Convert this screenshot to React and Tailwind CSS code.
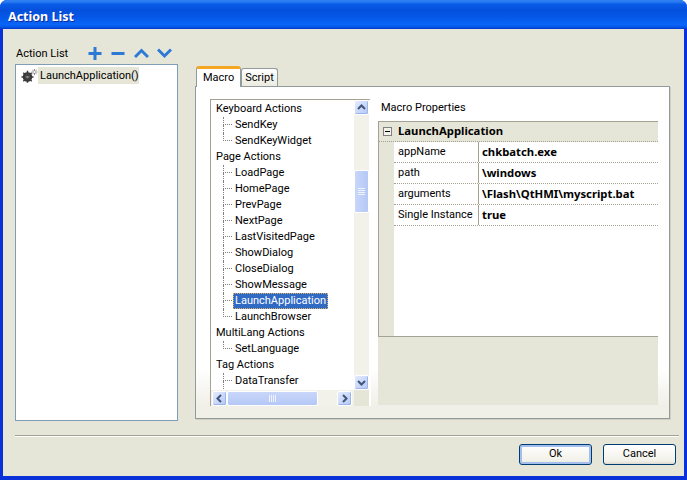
const TREE = [
  { label: "Keyboard Actions", group: true },
  { label: "SendKey" },
  { label: "SendKeyWidget", last: true },
  { label: "Page Actions", group: true },
  { label: "LoadPage" },
  { label: "HomePage" },
  { label: "PrevPage" },
  { label: "NextPage" },
  { label: "LastVisitedPage" },
  { label: "ShowDialog" },
  { label: "CloseDialog" },
  { label: "ShowMessage" },
  { label: "LaunchApplication", selected: true },
  { label: "LaunchBrowser", last: true },
  { label: "MultiLang Actions", group: true },
  { label: "SetLanguage", last: true },
  { label: "Tag Actions", group: true },
  { label: "DataTransfer" },
];

const PROPS = [
  ["appName", "chkbatch.exe"],
  ["path", "\\windows"],
  ["arguments", "\\Flash\\QtHMI\\myscript.bat"],
  ["Single Instance", "true"],
];

function Gear() {
  return (
    <svg width="17" height="14" viewBox="0 0 17 14" className="shrink-0">
      <circle cx="6.5" cy="8" r="3.6" fill="none" stroke="#3a3a3a" strokeWidth="2.4" />
      <g stroke="#3a3a3a" strokeWidth="1.5">
        <path d="M6.5 1.8v12M.5 8h12M2.3 3.8l8.4 8.4M10.7 3.8l-8.4 8.4" />
      </g>
      <circle cx="6.5" cy="8" r="1.3" fill="#8a8a8a" />
      <g stroke="#8c8c8c" strokeWidth="1">
        <path d="M13.5 0v6M10.5 3h6M11.4 1l4.2 4M15.6 1l-4.2 4" />
      </g>
      <circle cx="13.5" cy="3" r="1" fill="#fff" />
    </svg>
  );
}

function ToolIcon({ d }) {
  return (
    <svg width="15" height="13" viewBox="0 0 15 13" className="shrink-0">
      <path d={d} fill="none" stroke="#2d79d6" strokeWidth="3" />
    </svg>
  );
}

function ScrollButton({ d }) {
  return (
    <div className="w-[15px] h-[15px] shrink-0 rounded-[2px] border border-white bg-[linear-gradient(135deg,#e3ebfd,#b4c8f6)] flex items-center justify-center shadow-[inset_-1px_-1px_0_#9db6ea]">
      <svg width="9" height="9" viewBox="0 0 9 9">
        <path d={d} fill="none" stroke="#41557a" strokeWidth="2" />
      </svg>
    </div>
  );
}

function Grip({ vertical }) {
  return (
    <div className={`flex ${vertical ? "flex-col w-[7px]" : "flex-row h-[7px]"} gap-px`}>
      {[0, 1, 2, 3].map((i) => (
        <div key={i} className={`${vertical ? "h-px w-full" : "w-px h-full"} bg-[#eef3fe]`} />
      ))}
    </div>
  );
}

function TreeRow({ item }) {
  if (item.group) {
    return <div className="h-4 pl-[5px] leading-4 whitespace-nowrap">{item.label}</div>;
  }
  return (
    <div className="h-4 flex items-center whitespace-nowrap">
      <div className="ml-[12px] w-[9px] h-4 shrink-0 flex flex-col">
        <div className="h-2 border-l border-b border-dotted border-[#808080]" />
        {!item.last && <div className="h-2 border-l border-dotted border-[#808080]" />}
      </div>
      {item.selected ? (
        <span className="ml-px px-[2px] w-[95px] h-[16px] leading-[15px] bg-[#316ac5] text-white outline-1 outline-dotted outline-offset-[-1px] outline-[#d8b060]">
          {item.label}
        </span>
      ) : (
        <span className="ml-[3px]">{item.label}</span>
      )}
    </div>
  );
}

function PushButton({ label, focused }) {
  return (
    <button
      className={`w-[73px] h-[21px] rounded-[3px] border border-[#003c74] bg-[linear-gradient(#ffffff,#f1f0e8_85%,#dcd8ce)] text-black ${
        focused ? "shadow-[inset_0_0_0_2px_#a5bfec]" : ""
      }`}
    >
      {label}
    </button>
  );
}

function TreePanel() {
  return (
    <div className="w-[161px] h-[307px] shrink-0 flex flex-col bg-white border-t border-l border-[#a5a294] border-r-2 border-r-white overflow-hidden">
      <div className="flex flex-1 min-h-0">
        <div className="flex-1 pt-px overflow-hidden">
          {TREE.map((item) => (
            <TreeRow key={item.label} item={item} />
          ))}
        </div>
        <div className="w-[15px] shrink-0 flex flex-col bg-[#f2f1ea]">
          <ScrollButton d="M1 6l3.5-3.5L8 6" />
          <div className="mt-[55px] h-[43px] rounded-[2px] border border-white bg-[linear-gradient(90deg,#c9d6fa,#b4c8f6)] flex items-center justify-center">
            <Grip vertical />
          </div>
          <div className="flex-1" />
          <ScrollButton d="M1 3l3.5 3.5L8 3" />
        </div>
      </div>
      <div className="h-[16px] shrink-0 flex">
        <div className="flex-1 flex bg-[#f2f1ea] pl-px pt-px">
          <ScrollButton d="M6 1L2.5 4.5 6 8" />
          <div className="w-[91px] h-[15px] rounded-[2px] border border-white bg-[linear-gradient(#c9d6fa,#b4c8f6)] flex items-center justify-center">
            <Grip />
          </div>
          <div className="flex-1" />
          <ScrollButton d="M3 1l3.5 3.5L3 8" />
          <div className="w-[2px]" />
        </div>
        <div className="w-[15px] bg-[#e6e6d8]" />
      </div>
    </div>
  );
}

function PropertyPanel() {
  return (
    <div className="flex-1 min-w-0 ml-[7px] flex flex-col">
      <div className="h-[22px] pl-[3px] leading-[18px] whitespace-nowrap">Macro Properties</div>
      <div className="w-[280px] h-[216px] flex flex-col border-l border-t border-[#a5a294] bg-white">
        <div className="h-[20px] flex items-center bg-[#e6e6d8] border-b border-dotted border-[#a5a294]">
          <div className="ml-[4px] w-[9px] h-[9px] border border-[#808080] flex items-center justify-center bg-[#f2f1ea]">
            <div className="w-[5px] h-px bg-black" />
          </div>
          <span className="ml-[6px] font-['Noto_Sans',sans-serif] font-bold text-[11.3px]">LaunchApplication</span>
        </div>
        <div className="flex flex-1">
          <div className="w-[15px] shrink-0 bg-[#e6e6d8]" />
          <div className="flex-1">
            {PROPS.map(([name, value]) => (
              <div key={name} className="h-[21px] flex border-b border-dotted border-[#a5a294]">
                <div className="w-[85px] shrink-0 pl-[4px] leading-[19px] border-r border-[#a5a294] whitespace-nowrap">
                  {name}
                </div>
                <div className="pl-[3px] leading-[20px] font-['Noto_Sans',sans-serif] font-bold text-[11.3px] whitespace-nowrap">
                  {value}
                </div>
              </div>
            ))}
          </div>
        </div>
      </div>
      <div className="w-[280px] h-[69px] bg-[#e6e6d8] border-t border-[#a5a294]" />
    </div>
  );
}

export default function App() {
  return (
    <div className="w-[687px] h-[480px] flex flex-col overflow-hidden rounded-t-[7px] bg-[#0831d9] font-['Roboto',sans-serif] text-[11px] text-black">
      <div className="h-[29px] shrink-0 pl-[8px] pt-[5px] flex items-center font-['Noto_Sans',sans-serif] text-[12.5px] font-bold text-white [text-shadow:1px_1px_0_#0f2a9c] bg-[linear-gradient(#2f80f4_0,#2a7cf2_6%,#0a5ce8_14%,#0450dc_35%,#0558e8_60%,#0a66f8_85%,#0558e8_93%,#0438c8_100%)]">
        Action List
      </div>
      <div className="flex-1 mx-[3px] mb-[4px] bg-[#e6e6d8] flex flex-col min-h-0">
        <div className="flex pl-[12px] h-[392px] shrink-0">
          <div className="w-[163px] shrink-0 flex flex-col">
            <div className="h-[35px] flex items-end pb-px pl-px">
              <span className="w-[72px] leading-[18px]">Action List</span>
              <div className="flex items-center gap-[8px] pb-[3px]">
                <ToolIcon d="M7 0v13M.5 6.5h13" />
                <ToolIcon d="M.5 6.5h13" />
                <ToolIcon d="M1 10l6.5-6.5L14 10" />
                <ToolIcon d="M1 2.5L7.500 9 14 2.500" />
              </div>
            </div>
            <div className="h-[357px] border border-[#7f9db9] bg-white pt-[2px] pl-[2px]">
              <div className="flex items-center h-[17px]">
                <div className="pl-[3px]">
                  <Gear />
                </div>
                <span className="bg-[#e6e6d8] pl-[2px] w-[101px] h-[17px] leading-[17px] whitespace-nowrap">
                  LaunchApplication()
                </span>
              </div>
            </div>
          </div>
          <div className="ml-[17px] w-[475px] shrink-0 pt-[37px] flex flex-col">
            <div className="h-[20px] flex items-end pl-px relative z-10">
              <div className="w-[45px] h-[21px] -mb-px bg-white border-x border-[#919b9c] rounded-t-[3px] border-t-[3px] border-t-[#f5a623] pl-[6px] leading-[17px]">
                Macro
              </div>
              <div className="w-[37px] h-[18px] bg-[linear-gradient(#ffffff,#ecebe0)] border border-[#919b9c] border-b-0 rounded-t-[3px] text-center leading-[17px]">
                Script
              </div>
            </div>
            <div className="h-[333px] border border-[#919b9c] bg-[linear-gradient(#ffffff_85%,#f1f0e8_96%)] pl-[14px] pt-[12px] pb-[13px] flex shadow-[1px_1px_0_#d0cfc0]">
              <TreePanel />
              <PropertyPanel />
            </div>
          </div>
        </div>
        <div className="ml-[12px] mr-[5px] mt-[14px] h-[2px] shrink-0 border-t border-[#a5a294] border-b border-b-white" />
        <div className="flex justify-end gap-[11px] pr-[8px] mt-[7px]">
          <PushButton label="Ok" focused />
          <PushButton label="Cancel" />
        </div>
      </div>
    </div>
  );
}
